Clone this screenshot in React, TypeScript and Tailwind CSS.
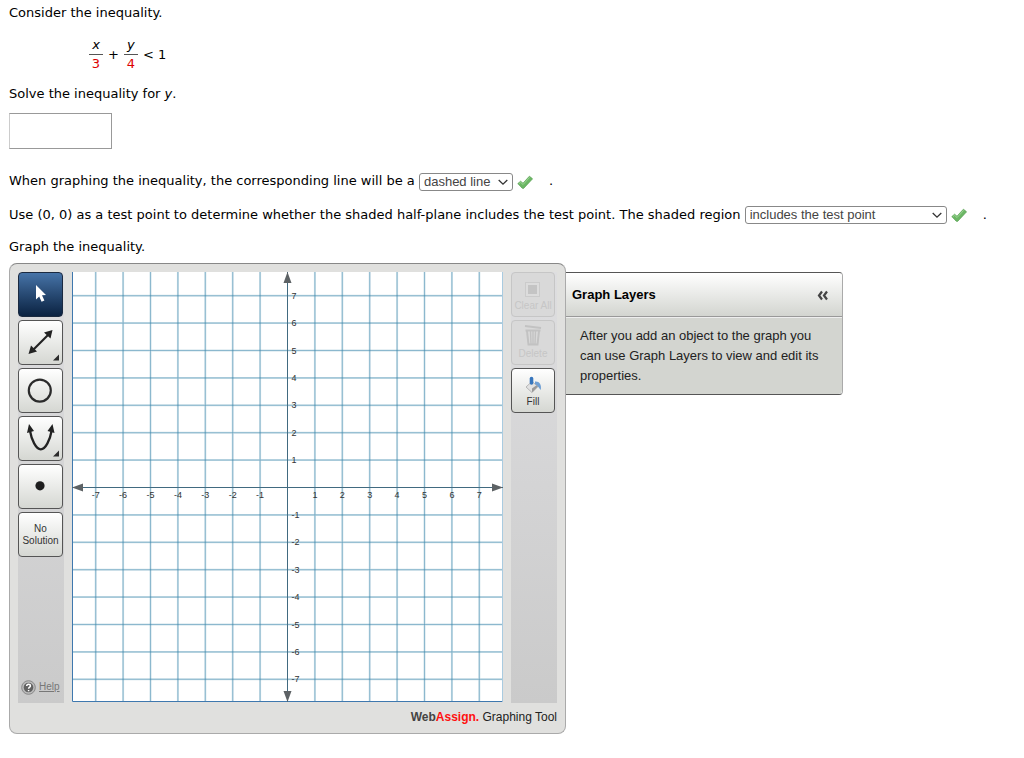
import React, { useState } from 'react';

type Tool = 'select' | 'line' | 'circle' | 'parabola' | 'point' | 'none';

const GRAPH_SIZE = 431;
const CENTER = 215.5;
const UNIT = 27.4;
const TICKS = [-7, -6, -5, -4, -3, -2, -1, 1, 2, 3, 4, 5, 6, 7];

const CheckMark: React.FC = () => (
  <svg className="inline-block w-4 h-4 ml-1 mr-4 align-middle" viewBox="0 0 16 16" role="img" aria-label="Correct">
    <path d="M0.8 9.6 3.6 7.2 6 9.2 12.4 2.2 15.6 4.8 6.6 14.4 5.2 14.2Z" fill="#6cb765" stroke="#57a052" strokeWidth="0.7" strokeLinejoin="round" />
    <path d="M2 9.6 3.6 8.4 6.1 10.5 12.6 3.4" fill="none" stroke="#9bd492" strokeWidth="1" />
  </svg>
);

interface FractionProps {
  top: string;
  bottom: string;
}

const Fraction: React.FC<FractionProps> = ({ top, bottom }) => (
  <span className="flex flex-col w-3.5 text-center">
    <i className="border-b border-[#555]">{top}</i>
    <span className="text-[#d00]">{bottom}</span>
  </span>
);

interface SelectProps {
  id: string;
  width: string;
  options: string[];
}

const Select: React.FC<SelectProps> = ({ id, width, options }) => (
  <span className={`relative inline-flex items-center align-middle ${width}`}>
    <select
      id={id}
      defaultValue={options[0]}
      className="appearance-none w-full h-[18px] pl-1 pr-5 border border-[#888] rounded-[3px] bg-white text-[13px] leading-4 text-[#444] font-['Liberation_Sans',Arial,sans-serif]"
    >
      {options.map((option) => (
        <option key={option}>{option}</option>
      ))}
    </select>
    <svg className="absolute right-[5px] w-2.5 h-2.5 pointer-events-none" viewBox="0 0 10 10" fill="none" stroke="#333" strokeWidth="1.3">
      <path d="M0.7 3 5 7.2 9.3 3" />
    </svg>
  </span>
);

interface ToolButtonProps {
  label: string;
  active?: boolean;
  onClick?: () => void;
  children: React.ReactNode;
}

const ToolButton: React.FC<ToolButtonProps> = ({ label, active, onClick, children }) => (
  <button
    type="button"
    aria-label={label}
    aria-pressed={active}
    onClick={onClick}
    className={`flex items-center justify-center w-[45px] h-[45px] rounded border text-[10px] leading-3 text-[#333] ${
      active
        ? 'border-[#1b2a40] bg-linear-to-b from-[#4774a8] to-[#0b2342]'
        : 'border-[#555] bg-linear-to-b from-white to-[#d5d7d2]'
    }`}
  >
    {children}
  </button>
);

const Corner: React.FC = () => <path d="M40 33.5V39.5H34Z" fill="#2b2b2b" />;

const Graph: React.FC = () => (
  <svg className="block w-[431px] h-[431px] bg-white" viewBox="0 0 431 431" role="img" aria-label="Coordinate grid from -7 to 7">
    {TICKS.map((n) => (
      <g key={n} stroke="#3c87ad">
        <path d={`M${CENTER + n * UNIT} 0V${GRAPH_SIZE}M0 ${CENTER + n * UNIT}H431`} strokeOpacity="0.25" strokeWidth="2" />
        <path d={`M${CENTER + n * UNIT} 0V${GRAPH_SIZE}M0 ${CENTER + n * UNIT}H431`} strokeOpacity="0.45" />
      </g>
    ))}
    <path d="M0.5 0V429.5H430.5" fill="none" stroke="#3f78ae" />
    <path d="M430.5 0V429" stroke="#a9cbe0" />
    <path d="M0 430.5H431" stroke="#e0e0de" />
    <path d="M215.5 0V430M0 215.5H431" stroke="#416a80" />
    <path d="M215.5 0 219.5 11H211.5ZM215.5 430 219.5 419H211.5ZM0 215.5 11 211.5V219.5ZM431 215.5 420 211.5V219.5Z" fill="#5d6265" />
    <g fill="#333" className="text-[9px]">
      {TICKS.map((n) => (
        <text key={n} x={CENTER + n * UNIT} y="226" textAnchor="middle">
          {n}
        </text>
      ))}
      {TICKS.map((n) => (
        <text key={n} x="219.5" y={CENTER - n * UNIT + 3}>
          {n}
        </text>
      ))}
    </g>
  </svg>
);

const LeftToolbar: React.FC = () => {
  const [tool, setTool] = useState<Tool>('select');

  return (
    <div className="flex flex-col justify-between w-[46px] bg-linear-to-b from-[#dedee0] to-[#cacaca]">
      <div className="flex flex-col gap-[3px]">
        <ToolButton label="Select" active={tool === 'select'} onClick={() => setTool('select')}>
          <svg className="w-[43px] h-[43px]" viewBox="0 0 43 43">
            <path d="M17 12V26.5L20.2 23.5 22.6 28.8 25.4 27.5 23 22.3 27 22Z" fill="#fff" />
          </svg>
        </ToolButton>
        <ToolButton label="Line" active={tool === 'line'} onClick={() => setTool('line')}>
          <svg className="w-[43px] h-[43px]" viewBox="0 0 43 43">
            <path d="M14 29 30 13" stroke="#222" strokeWidth="2.2" />
            <path d="M33.5 9 31.5 17.5 25 11.5ZM9.5 33 12 24.5 18 30.5Z" fill="#222" />
            <Corner />
          </svg>
        </ToolButton>
        <ToolButton label="Circle" active={tool === 'circle'} onClick={() => setTool('circle')}>
          <svg className="w-[43px] h-[43px]" viewBox="0 0 43 43">
            <circle cx="20.8" cy="21.6" r="11" fill="none" stroke="#2b2b2b" strokeWidth="2.2" />
          </svg>
        </ToolButton>
        <ToolButton label="Parabola" active={tool === 'parabola'} onClick={() => setTool('parabola')}>
          <svg className="w-[43px] h-[43px]" viewBox="0 0 43 43">
            <path d="M10.8 13C12.5 23 17 32.3 21.8 32.3S31 23 32.8 13" fill="none" stroke="#222" strokeWidth="2.3" />
            <path d="M10 7 15 14 8 16ZM33.5 7 35.5 16 28.5 14Z" fill="#222" />
            <Corner />
          </svg>
        </ToolButton>
        <ToolButton label="Point" active={tool === 'point'} onClick={() => setTool('point')}>
          <svg className="w-[43px] h-[43px]" viewBox="0 0 43 43">
            <circle cx="21" cy="20.8" r="4.6" fill="#1e1e1e" />
          </svg>
        </ToolButton>
        <ToolButton label="No Solution" active={tool === 'none'} onClick={() => setTool('none')}>
          <span>
            No
            <br />
            Solution
          </span>
        </ToolButton>
      </div>
      <a href="#help" className="flex items-center gap-[3px] pl-[3px] pb-2 text-[10px] leading-4 text-[#777] underline">
        <svg className="w-[15px] h-[15px]" viewBox="0 0 15 15" aria-hidden="true">
          <circle cx="7.5" cy="7.5" r="6.8" fill="#bbb" stroke="#888" />
          <circle cx="7.5" cy="7.5" r="4.8" fill="#626262" />
          <path d="M5.7 6C5.7 3.6 9.4 3.7 9.4 5.9 9.4 7.2 7.6 7.1 7.6 8.8M7.6 10V11.2" fill="none" stroke="#fff" strokeWidth="1.5" />
        </svg>
        Help
      </a>
    </div>
  );
};

interface ActionButtonProps {
  label: string;
  disabled?: boolean;
  children: React.ReactNode;
}

const ActionButton: React.FC<ActionButtonProps> = ({ label, disabled, children }) => (
  <button
    type="button"
    disabled={disabled}
    className={`flex flex-col items-center justify-end w-11 h-[45px] pb-1 rounded border text-[10px] leading-3 whitespace-nowrap ${
      disabled
        ? 'border-[#c6c6c6] bg-[#d9d9d9] text-[#c6c6c6]'
        : 'border-[#555] bg-linear-to-b from-white to-[#d5d7d2] text-[#333]'
    }`}
  >
    {children}
    {label}
  </button>
);

const RightToolbar: React.FC = () => (
  <div className="flex flex-col gap-[3px] w-[46px] bg-linear-to-b from-[#dedee0] to-[#cacaca]">
    <ActionButton label="Clear All" disabled>
      <svg className="w-5 h-5" viewBox="0 0 20 20">
        <rect x="2.5" y="2.5" width="14" height="14" fill="#dcdcdc" stroke="#cbcbcb" />
        <rect x="5" y="5" width="9" height="9" fill="#c4c4c4" />
      </svg>
    </ActionButton>
    <ActionButton label="Delete" disabled>
      <svg className="w-6 h-6" viewBox="0 0 24 24" fill="none" stroke="#c2c2c2">
        <path d="M4 2 20 4" strokeWidth="2" />
        <path d="M4.5 6.5H19.5" strokeWidth="2" />
        <path d="M6 7 7.5 20.5H16.5L18 7" strokeWidth="2" />
        <path d="M9.5 7 10 20M12 7V20M14.5 7 14 20" strokeWidth="1.4" />
      </svg>
    </ActionButton>
    <ActionButton label="Fill">
      <svg className="w-5 h-5" viewBox="0 0 20 20">
        <path d="M3 11 9 5.5 15 10.5 9 16.5Z" fill="#e2e2e2" stroke="#aaa" strokeWidth="0.8" />
        <path d="M9 16.5 15 10.5 13.5 9.2 9 12.5Z" fill="#999" />
        <path d="M12 5.5C16 5 18.8 8 17.8 14 16 12.5 14.5 9 12 8Z" fill="#6f9fd3" />
        <path d="M8.5 2.5V7" stroke="#3776bd" strokeWidth="3.6" strokeLinecap="round" />
      </svg>
    </ActionButton>
  </div>
);

const GraphLayers: React.FC = () => (
  <section className="w-[277px] mt-[9px] border border-l-0 border-[#555] border-r-[#aaa] rounded-r text-[13px]">
    <div className="flex items-center justify-between h-11 pl-1.5 pr-3.5 border-b border-[#999] rounded-tr bg-linear-to-b from-white to-[#d3d5d0]">
      <h2 className="font-bold text-black">Graph Layers</h2>
      <button type="button" aria-label="Collapse Graph Layers">
        <svg className="w-3 h-3" viewBox="0 0 12 12" fill="none" stroke="#444" strokeWidth="2.2">
          <path d="M6 2.5 3 6.5 6 10.5M11 2.5 8 6.5 11 10.5" />
        </svg>
      </button>
    </div>
    <p className="px-3.5 py-2 border-t border-[#eee] rounded-br bg-[#d3d5d0] leading-5 text-[#222]">
      After you add an object to the graph you can use Graph Layers to view and edit its properties.
    </p>
  </section>
);

const GraphingTool: React.FC = () => (
  <div className="flex items-start font-['Liberation_Sans',Arial,sans-serif]">
    <div className="pt-2 px-2 border border-[#aaa] border-t-[#888] rounded-lg bg-[#e0e0de]">
      <div className="flex gap-2">
        <LeftToolbar />
        <Graph />
        <RightToolbar />
      </div>
      <p className="pt-1 pb-1.5 text-right text-[12px] leading-5 text-[#222]">
        <b className="text-[#444]">Web</b>
        <b className="text-[#f11]">Assign.</b> Graphing Tool
      </p>
    </div>
    <GraphLayers />
  </div>
);

export default function App() {
  return (
    <main className="pl-[9px] pt-1 bg-white text-black text-[13px] leading-[18px] font-['DejaVu_Sans',Verdana,sans-serif]">
      <p>Consider the inequality.</p>
      <div className="flex items-center gap-[5px] pl-20 mt-3.5">
        <Fraction top="x" bottom="3" />
        <span>+</span>
        <Fraction top="y" bottom="4" />
        <span>&lt; 1</span>
      </div>
      <label htmlFor="solution" className="block mt-3">
        Solve the inequality for <i>y</i>.
      </label>
      <input
        id="solution"
        type="text"
        className="block w-[103px] h-9 mt-2.5 px-2 border border-[#999] border-l-[#ccc] bg-white"
      />
      <p className="mt-[23px]">
        <label htmlFor="line-style">When graphing the inequality, the corresponding line will be a </label>
        <Select id="line-style" width="w-[94px]" options={['dashed line', 'solid line']} />
        <CheckMark />.
      </p>
      <p className="mt-[15px]">
        <label htmlFor="region">
          Use (0, 0) as a test point to determine whether the shaded half-plane includes the test point. The shaded region{' '}
        </label>
        <Select
          id="region"
          width="w-[202px]"
          options={['includes the test point', 'does not include the test point']}
        />
        <CheckMark />.
      </p>
      <p className="mt-3.5 mb-[7px]">Graph the inequality.</p>
      <GraphingTool />
    </main>
  );
}
